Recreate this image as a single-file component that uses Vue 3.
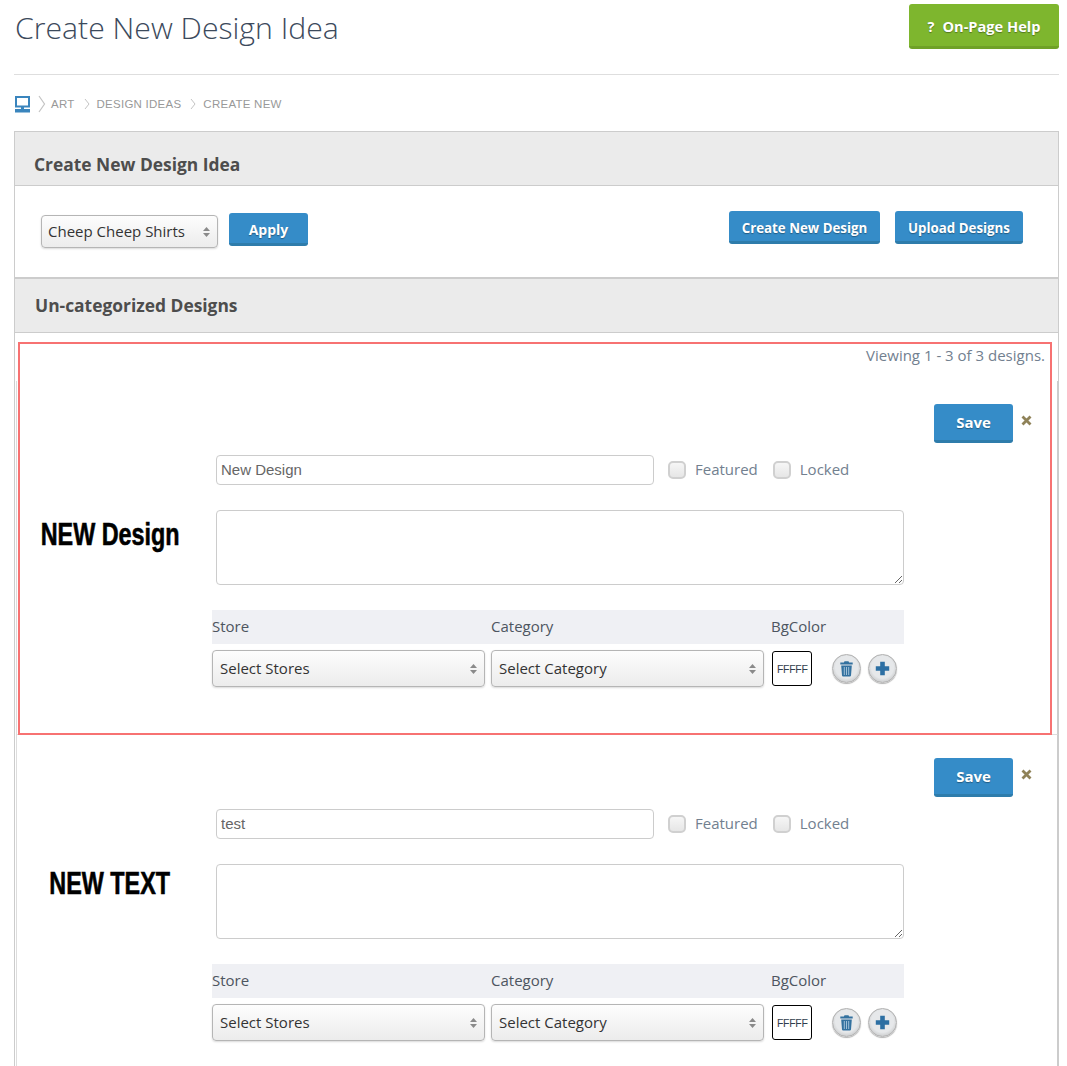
<script setup>
const designs = [
  { id: 1, label: 'NEW Design', name: 'New Design', labelTop: 0 },
  { id: 2, label: 'NEW TEXT', name: 'test', labelTop: 1 }
]
</script>

<template>
  <div class="page">
    <header class="top">
      <h1>Create New Design Idea</h1>
      <button class="btn help"><span class="q">?</span>On-Page Help</button>
    </header>

    <nav class="crumbs">
      <svg class="home" width="16" height="17" viewBox="0 0 16 17">
        <rect x="1" y="1" width="13" height="9.500" fill="none" stroke="#3a85bd" stroke-width="2" />
        <rect x="6" y="11" width="3" height="2" fill="#3a85bd" />
        <rect x="0" y="13" width="15" height="3.500" fill="#3a85bd" />
      </svg>
      <svg class="chev big" width="8" height="18" viewBox="0 0 8 18"><polyline points="1,1 6.500,9 1,17" fill="none" stroke="#c4c4c4" stroke-width="1.200" /></svg>
      <span>ART</span>
      <svg class="chev" width="6" height="12" viewBox="0 0 6 12"><polyline points="1,1 5,6 1,11" fill="none" stroke="#c4c4c4" stroke-width="1" /></svg>
      <span>DESIGN IDEAS</span>
      <svg class="chev" width="6" height="12" viewBox="0 0 6 12"><polyline points="1,1 5,6 1,11" fill="none" stroke="#c4c4c4" stroke-width="1" /></svg>
      <span>CREATE NEW</span>
    </nav>

    <section class="panel">
      <h2 class="head">Create New Design Idea</h2>
      <div class="toolbar">
        <div class="left-tools">
          <div class="sel store-sel">
            <select><option>Cheep Cheep Shirts</option></select>
            <svg class="updown" width="7" height="10" viewBox="0 0 7 10"><path d="M3.500 0 7 4H0zM3.500 10 0 6h7z" fill="#8a8a8a" /></svg>
          </div>
          <button class="btn apply">Apply</button>
        </div>
        <div class="right-tools">
          <button class="btn create">Create New Design</button>
          <button class="btn upload">Upload Designs</button>
        </div>
      </div>

      <h2 class="head second">Un-categorized Designs</h2>
      <div class="viewing">Viewing 1 - 3 of 3 designs.</div>

      <article v-for="d in designs" :key="d.id" class="row">
        <div class="art-label" :class="{ lower: d.labelTop }"><span>{{ d.label }}</span></div>
        <div class="form">
          <div class="name-line">
            <input class="name" type="text" :value="d.name" />
            <label class="check"><i></i>Featured</label>
            <label class="check"><i></i>Locked</label>
          </div>
          <textarea class="desc"></textarea>
          <div class="titles">
            <span class="t1">Store</span>
            <span class="t2">Category</span>
            <span>BgColor</span>
          </div>
          <div class="controls">
            <div class="sel wide">
              <select><option>Select Stores</option></select>
              <svg class="updown" width="7" height="10" viewBox="0 0 7 10"><path d="M3.500 0 7 4H0zM3.500 10 0 6h7z" fill="#8a8a8a" /></svg>
            </div>
            <div class="sel wide">
              <select><option>Select Category</option></select>
              <svg class="updown" width="7" height="10" viewBox="0 0 7 10"><path d="M3.500 0 7 4H0zM3.500 10 0 6h7z" fill="#8a8a8a" /></svg>
            </div>
            <div class="swatch"><span>FFFFFF</span></div>
            <button class="round del" aria-label="Delete">
              <svg width="15" height="17" viewBox="0 0 15 17">
                <path d="M5.500 1.200h4l.6 1.300h3.600v2H1.300v-2h3.600z" fill="#33719f" />
                <path d="M2.200 5.400h10.600l-.8 10a1.200 1.200 0 0 1-1.200 1.100H4.200A1.200 1.200 0 0 1 3 15.400z" fill="#33719f" />
                <path d="M5.300 7v8M7.500 7v8M9.700 7v8" stroke="#9fc0d8" stroke-width="1" />
              </svg>
            </button>
            <button class="round add" aria-label="Add">
              <svg width="15" height="15" viewBox="0 0 15 15"><path d="M5.200 .8h4.600v4.400h4.400v4.600H9.800v4.400H5.200V9.800H.8V5.200h4.400z" fill="#2c6fa3" /></svg>
            </button>
          </div>
        </div>
        <div class="actions">
          <button class="btn save">Save</button>
          <svg class="close" width="11" height="11" viewBox="0 0 11 11"><path d="M1.500 1.500l8 8M9.500 1.500l-8 8" stroke="#8f8258" stroke-width="2.800" /></svg>
        </div>
      </article>

      <div class="annotation"></div>
    </section>
  </div>
</template>

<style>
html, body { margin: 0; overflow: hidden; background: #fff; }
</style>

<style scoped>
.page {
  height: 1066px;
  overflow: hidden;
  padding: 0 8px 0 14px;
  font-family: "Open Sans", sans-serif;
  color: #4d4d4d;
  box-sizing: border-box;
}
.top {
  display: flex;
  justify-content: space-between;
  align-items: flex-start;
  border-bottom: 1px solid #dedede;
  padding-top: 4px;
  height: 70px;
}
h1 {
  margin: 4px 0 0 1px;
  font-size: 30.200px;
  line-height: 40px;
  font-weight: 300;
  color: #3c4a5c;
}
.btn {
  border: 0;
  border-bottom: 3px solid #2e7cab;
  border-radius: 3px;
  background: #358cc8;
  color: #fff;
  font-family: "Open Sans", sans-serif;
  font-weight: 700;
  font-size: 14px;
  padding: 0;
  text-shadow: 0 1px 1px rgba(0, 0, 0, .35);
  box-sizing: border-box;
}
.help {
  width: 150px;
  height: 45px;
  padding-top: 2px;
  font-size: 14.600px;
  background: #7eb62e;
  border-bottom-color: #6fa127;
}
.q { margin-right: 8px; }
.crumbs {
  display: flex;
  align-items: center;
  height: 56px;
  padding-top: 2px;
  box-sizing: border-box;
  margin-left: 1px;
  font-family: "Liberation Sans", sans-serif;
  font-size: 11.500px;
  color: #999;
  letter-spacing: .25px;
}
.crumbs .home { margin-right: 7px; }
.crumbs .chev { margin: 0 7px 0 9px; }
.crumbs .chev.big { margin: 0 5px 0 0; }
.panel {
  position: relative;
  border: 1px solid #ccc;
  border-bottom: 0;
  height: 935px;
  box-sizing: border-box;
}
.head {
  margin: 0;
  height: 54px;
  padding: 6px 0 0 19px;
  line-height: 53px;
  box-sizing: border-box;
  background: #ebebeb;
  border-bottom: 1px solid #ccc;
  font-size: 17.400px;
  font-weight: 700;
  color: #4d4d4d;
}
.head.second {
  height: 56px;
  padding: 0 0 0 20px;
  line-height: 53px;
  border-top: 2px solid #ccc;
}
.toolbar {
  display: flex;
  justify-content: space-between;
  height: 91px;
  padding: 0 35px 0 26px;
  box-sizing: border-box;
}
.left-tools { display: flex; padding-top: 27px; gap: 11px; align-items: flex-start; }
.right-tools { display: flex; padding-top: 25px; gap: 15px; align-items: flex-start; }
.sel { position: relative; }
.sel select {
  appearance: none;
  width: 100%;
  height: 100%;
  border: 1px solid #b5b5b5;
  border-radius: 4px;
  background: linear-gradient(#fdfdfd, #ececec);
  box-shadow: 0 1px 2px rgba(0, 0, 0, .15);
  font-family: "Open Sans", sans-serif;
  font-size: 15px;
  color: #333;
  padding: 0 20px 0 6px;
  display: block;
  box-sizing: border-box;
}
.updown { position: absolute; right: 8px; top: 50%; margin-top: -5px; }
.store-sel { width: 177px; height: 33px; margin-top: 2px; }
.store-sel select { padding-bottom: 1px; }
.apply { width: 79px; height: 33px; padding-top: 3px; font-size: 14px; }
.create { width: 151px; height: 33px; padding-top: 4px; font-size: 13.300px; }
.upload { width: 128px; height: 33px; padding-top: 4px; font-size: 13.300px; }
.viewing {
  height: 48px;
  padding: 12px 13px 0 0;
  box-sizing: border-box;
  text-align: right;
  font-size: 15px;
  line-height: 20px;
  color: #72808f;
}
.row {
  display: grid;
  grid-template-columns: 195px 692px 1fr;
  height: 354px;
  box-sizing: border-box;
  border-bottom: 1px solid #ddd;
  border-left: 1px solid #ddd;
  border-right: 1px solid #ccc;
  margin-left: 1px;
}
.art-label {
  display: flex;
  justify-content: center;
  padding: 133px 9px 0 0;
  box-sizing: border-box;
  font-family: "Liberation Sans", sans-serif;
  font-weight: 700;
  font-size: 32px;
  line-height: 40px;
  color: #000;
  white-space: nowrap;
}
.art-label span {
  display: inline-block;
  transform: scaleX(.73);
  -webkit-text-stroke: .6px #000;
}
.art-label.lower { padding-top: 128px; }
.form { padding-top: 74px; min-width: 0; }
.name-line {
  display: flex;
  align-items: center;
  height: 30px;
  padding-left: 4px;
}
.name {
  width: 438px;
  height: 30px;
  border: 1px solid #ccc;
  border-radius: 4px;
  padding: 0 4px 1px;
  font-family: "Liberation Sans", sans-serif;
  font-size: 15px;
  color: #666;
  box-sizing: border-box;
  margin-right: 14px;
  outline: 0;
}
.check {
  display: flex;
  align-items: center;
  margin-top: -2px;
  font-size: 15px;
  color: #72808f;
  margin-right: 15px;
}
.check i {
  width: 18px;
  height: 18px;
  margin: 2px 9px 0 0;
  border: 2px solid #d0d0d0;
  border-radius: 5px;
  background: linear-gradient(#f6f6f6, #e6e6e6);
  box-sizing: border-box;
}
.desc {
  display: block;
  width: 688px;
  height: 75px;
  margin: 25px 0 25px 4px;
  border: 1px solid #ccc;
  border-radius: 4px;
  box-sizing: border-box;
  outline: 0;
}
.titles {
  display: flex;
  height: 34px;
  padding-bottom: 2px;
  box-sizing: border-box;
  align-items: center;
  background: #eff0f4;
  font-size: 15px;
  color: #4d5560;
}
.titles .t1, .titles .t2 { width: 279px; flex: none; }
.titles .t2 { width: 280px; }
.controls {
  display: flex;
  align-items: center;
  margin-top: 6px;
  height: 37px;
}
.wide { width: 273px; height: 37px; margin-right: 6px; }
.wide select { padding-left: 7px; padding-bottom: 2px; }
.swatch {
  width: 40px;
  height: 35px;
  margin: 0 20px 0 2px;
  border: 1px solid #000;
  border-radius: 3px;
  box-sizing: border-box;
  padding-left: 4px;
  font-family: "Liberation Sans", sans-serif;
  font-size: 10.500px;
  line-height: 35px;
  color: #2f3d4d;
}
.swatch span {
  display: block;
  width: 31px;
  height: 33px;
  overflow: hidden;
  white-space: nowrap;
  letter-spacing: -.3px;
}
.round {
  width: 29px;
  height: 29px;
  padding: 0;
  border: 1px solid #b0b0b0;
  border-radius: 50%;
  background: radial-gradient(circle at 50% 45%, #e6e8ea 55%, #adadad 100%);
  box-shadow: 0 1px 1px rgba(0, 0, 0, .3);
  display: flex;
  align-items: center;
  justify-content: center;
}
.add { margin-left: 7px; }
.actions { padding: 23px 0 0 30px; display: flex; align-items: flex-start; }
.save { width: 79px; height: 39px; font-size: 15px; }
.close { margin: 11px 0 0 8px; }
.annotation {
  position: absolute;
  left: 3px;
  top: 210px;
  width: 1034px;
  height: 393px;
  border: 2px solid #f77272;
  box-sizing: border-box;
  pointer-events: none;
}
</style>
